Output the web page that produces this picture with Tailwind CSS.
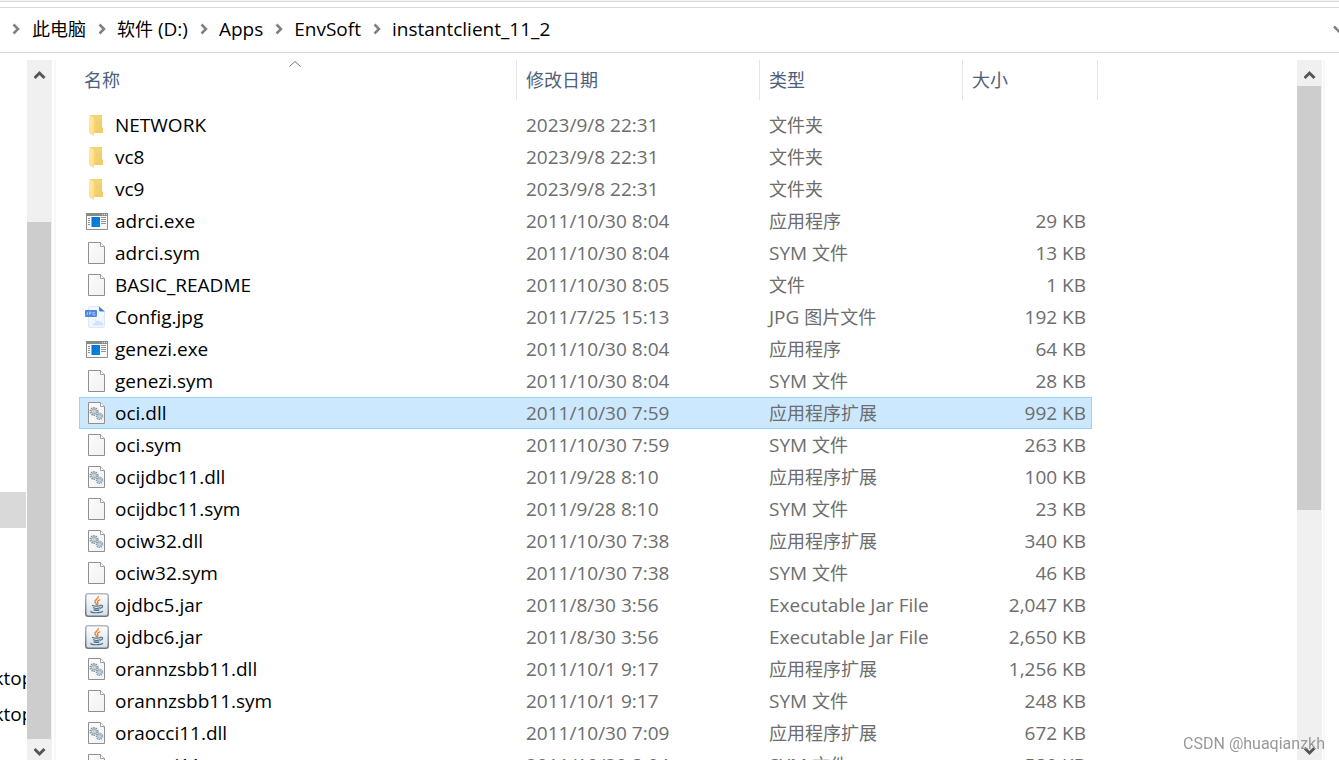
<!DOCTYPE html>
<html lang="zh-CN">
<head>
    <meta charset="UTF-8">
    <meta name="viewport" content="width=device-width, initial-scale=1.0">
    <title>instantclient_11_2</title>
    <script src="https://cdn.jsdelivr.net/npm/@tailwindcss/browser@4"></script>
    <style>
        body {
            font-family: 'Open Sans', 'Noto Sans CJK SC', sans-serif;
        }
    </style>
</head>
<body class="h-screen overflow-hidden flex flex-col bg-white text-black text-[19px] leading-6">
    <!-- Icon sprites -->
    <svg class="absolute size-0" xmlns="http://www.w3.org/2000/svg">
        <defs>
            <linearGradient id="folderFront" x1="0" y1="0" x2="1" y2="1">
                <stop offset="0" stop-color="#ffeaa6" />
                <stop offset="1" stop-color="#fbdc84" />
            </linearGradient>
            <linearGradient id="folderBack" x1="0" y1="0" x2="1" y2="1">
                <stop offset="0" stop-color="#f5d880" />
                <stop offset="1" stop-color="#efca63" />
            </linearGradient>
            <linearGradient id="paper" x1="0" y1="0" x2="1" y2="1">
                <stop offset="0" stop-color="#fbfbfb" />
                <stop offset="1" stop-color="#f0f2f2" />
            </linearGradient>
            <linearGradient id="jarBox" x1="0" y1="0" x2="0" y2="1">
                <stop offset="0" stop-color="#ffffff" />
                <stop offset="1" stop-color="#d9dde1" />
            </linearGradient>
            <linearGradient id="jarEdge" x1="0" y1="0" x2="0" y2="1">
                <stop offset="0" stop-color="#aebac5" />
                <stop offset="1" stop-color="#61788b" />
            </linearGradient>
            <linearGradient id="exeBlue" x1="0" y1="0" x2="1" y2="1">
                <stop offset="0" stop-color="#0a6fd0" />
                <stop offset="1" stop-color="#0086e4" />
            </linearGradient>
        </defs>
        <symbol id="folder" viewBox="0 0 24 24">
            <path d="M5 2h12v12l1 1v5H7z" fill="url(#folderBack)" />
            <path d="M4 2l5 3v18l-5-3z" fill="url(#folderFront)" />
        </symbol>
        <symbol id="exe" viewBox="0 0 24 24">
            <path d="M1.5 4.5h21v16h-21z" fill="#f7f7f7" stroke="#8a8e91" />
            <path d="M1 4h22v3H1z" fill="#84898c" />
            <path d="M17 5h1v1h-1zM19 5h1v1h-1zM21 5h1v1h-1z" fill="#e4e6e7" />
            <path d="M3 9.500h2M3 11.500h2M3 13.500h2M3 15.500h2M16 8.500h5M16 10.500h5M16 12.500h5M16 14.500h5" stroke="#8f9497" />
            <path d="M6.500 8h8.500v10H6.500z" fill="url(#exeBlue)" />
        </symbol>
        <symbol id="file" viewBox="0 0 24 24">
            <path d="M3.500 1.500h12l4 4v17h-16z" fill="url(#paper)" stroke="#8f8f8f" />
            <path d="M15.500 1.500v4h4" fill="#fff" stroke="#a0a0a0" />
        </symbol>
        <symbol id="dll" viewBox="0 0 24 24">
            <use href="#file" />
            <circle cx="9" cy="10.500" r="3.700" fill="none" stroke="#87939c" stroke-width="1.700" stroke-dasharray="1.450 .88" />
            <circle cx="9" cy="10.500" r="2.500" fill="#dce2e5" stroke="#8e9ba4" stroke-width=".9" />
            <circle cx="9" cy="10.500" r=".9" fill="#fff" stroke="#8e9ba4" stroke-width=".6" />
            <circle cx="14.500" cy="15.300" r="3" fill="none" stroke="#7d99aa" stroke-width="1.500" stroke-dasharray="1.250 .84" />
            <circle cx="14.500" cy="15.300" r="1.900" fill="#dcebf2" stroke="#86a3b4" stroke-width=".9" />
            <circle cx="14.500" cy="15.300" r=".6" fill="#fff" stroke="#86a3b4" stroke-width=".5" />
        </symbol>
        <symbol id="jpg" viewBox="0 0 24 24">
            <path d="M5 1.500h9.500l5 5V21q0 1.500-1.500 1.500H5Q3.500 22.500 3.500 21V3Q3.500 1.500 5 1.500z" fill="#f2f6fe" stroke="#dfe8fa" />
            <path d="M14 1.500v3.500q0 1.500 1.500 1.500h4.500z" fill="#4a80da" />
            <path d="M8 20.500q-.5-2.500 2-3 2-3.500 4.500-1 3.500-.2 4 4z" fill="#d3e1fa" />
            <circle cx="10" cy="15" r="1" fill="#dce7fb" />
            <rect x="0" y="5" width="12" height="7" rx="1" fill="#4f87e0" />
            <path d="M2.500 7v2.500h-1M4.500 10V7h1.500v1.500H4.500M10 7.500H8V10h2V9" fill="none" stroke="#b7d0f6" stroke-width=".8" />
        </symbol>
        <symbol id="jar" viewBox="0 0 24 24">
            <rect x=".75" y=".75" width="22.500" height="22.500" rx="2.500" fill="url(#jarBox)" stroke="url(#jarEdge)" stroke-width="1.500" />
            <path d="M13.200 3.500c.8 2.500-4 3.200-3.300 5.300.3 1 1.400 1.500 1.600 2.700M15 6.800c-2.300.7-3.200 1.800-2.200 2.900.6.700.3 1.300-.3 2" fill="none" stroke="#ee7d2b" stroke-width="1.300" stroke-linecap="round" />
            <path d="M7.500 12.500c1.500.8 6.500.8 8 0M8.300 14.800c1.500.7 5 .7 6.500 0M9 16.900c1.300.5 3.800.5 5 0M15.800 12.300c2.300-.5 2.500 2-.3 3M6 18.300c-1.800 1.800 9.500 2 11.500.2" fill="none" stroke="#44708f" stroke-width="1.200" stroke-linecap="round" />
        </symbol>
        <symbol id="crumb" viewBox="0 0 8 12">
            <path d="M1.500 1.500L6 6l-4.500 4.500" fill="none" stroke="#808080" stroke-width="2.500" />
        </symbol>
        <symbol id="up" viewBox="0 0 12 10">
            <path d="M.5 8l5-5 5 5" fill="none" stroke="#565656" stroke-width="3" />
        </symbol>
        <symbol id="down" viewBox="0 0 12 10">
            <path d="M.5 2l5 5 5-5" fill="none" stroke="#565656" stroke-width="3" />
        </symbol>
    </svg>

    <div class="h-0.5 shrink-0 bg-[#f5f5f5] border-b border-[#d9d9d9]"></div>

    <!-- Address bar -->
    <nav aria-label="地址" class="mt-[5px] h-[46px] shrink-0 border-y border-[#d9d9d9] pl-3 pb-0.5 flex items-center justify-between overflow-hidden">
        <ol class="flex items-center whitespace-nowrap">
            <li class="flex items-center"><svg class="w-2 h-3 mr-3"><use href="#crumb" /></svg><a href="#" class="text-lg leading-6">此电脑</a></li>
            <li class="flex items-center"><svg class="w-2 h-3 ml-3 mr-[11px]"><use href="#crumb" /></svg><a href="#"><span class="text-lg leading-6">软件</span> (D:)</a></li>
            <li class="flex items-center"><svg class="w-2 h-3 ml-3 mr-[11px]"><use href="#crumb" /></svg><a href="#">Apps</a></li>
            <li class="flex items-center"><svg class="w-2 h-3 ml-3 mr-[11px]"><use href="#crumb" /></svg><a href="#">EnvSoft</a></li>
            <li class="flex items-center"><svg class="w-2 h-3 ml-3 mr-[11px]"><use href="#crumb" /></svg><a href="#">instantclient_11_2</a></li>
        </ol>
        <button aria-label="历史记录" class="-mr-1.5 shrink-0"><svg class="w-3 h-2.5" viewBox="0 0 12 10"><path d="M1 2.500l5 5 5-5" fill="none" stroke="#808080" stroke-width="2.500" /></svg></button>
    </nav>

    <main class="flex-1 min-h-0 mt-[7px] flex">
        <!-- Navigation pane -->
        <aside class="w-[26px] mr-px shrink-0 overflow-hidden flex flex-col">
            <a href="#" aria-label="当前文件夹" class="mt-[432px] h-9 shrink-0 bg-[#d9d9d9]"></a>
            <a href="#" class="mt-[132px] h-9 shrink-0 -ml-10 flex items-center">Desktop</a>
            <a href="#" class="h-9 shrink-0 -ml-10 flex items-center">Desktop</a>
        </aside>
        <div class="w-[25px] shrink-0 bg-[#f0f0f0] flex flex-col">
            <button aria-label="向上滚动" class="h-[26px] shrink-0 flex items-center justify-center pt-1"><svg class="w-3 h-2.5"><use href="#up" /></svg></button>
            <div class="flex-1 flex flex-col pt-[136px]">
                <div class="flex-1 mr-px bg-[#cdcdcd]"></div>
            </div>
            <button aria-label="向下滚动" class="h-[21px] shrink-0 flex items-center justify-center pt-1"><svg class="w-3 h-2.5"><use href="#down" /></svg></button>
        </div>
        <div class="w-0.5 ml-0.5 shrink-0 bg-[#f7f7f7]"></div>

        <!-- File list -->
        <section class="flex-1 min-w-0 overflow-hidden pl-[23px]">
            <table class="table-fixed w-[1019px] border-separate border-spacing-0 whitespace-nowrap">
                <colgroup>
                    <col class="w-[438px]">
                    <col class="w-[243px]">
                    <col class="w-[203px]">
                    <col class="w-[129px]">
                    <col class="w-1.5">
                </colgroup>
                <thead>
                    <tr class="text-left text-lg text-[#4c607a]">
                        <th class="p-0 pb-[9px] font-normal">
                            <div class="relative h-10 pl-[5px] flex items-center border-r border-[#e5e5e5]">
                                名称
                                <svg class="absolute top-px left-[210px] w-3 h-1.5" viewBox="0 0 12 6"><path d="M.5 5.500l5.500-5 5.500 5" fill="none" stroke="#6e6e6e" /></svg>
                            </div>
                        </th>
                        <th class="p-0 pb-[9px] font-normal"><div class="h-10 pl-[9px] flex items-center border-r border-[#e5e5e5]">修改日期</div></th>
                        <th class="p-0 pb-[9px] font-normal"><div class="h-10 pl-[9px] flex items-center border-r border-[#e5e5e5]">类型</div></th>
                        <th class="p-0 pb-[9px] font-normal"><div class="h-10 pl-[9px] flex items-center">大小</div></th>
                        <td class="p-0 pb-[9px]"><div class="h-10 border-r border-[#e5e5e5]"></div></td>
                    </tr>
                </thead>
                <tbody id="fileList"></tbody>
            </table>
        </section>

        <div class="w-[25px] shrink-0 bg-[#f0f0f0] flex flex-col">
            <button aria-label="向上滚动" class="h-[26px] shrink-0 flex items-center justify-center pt-1"><svg class="w-3 h-2.5"><use href="#up" /></svg></button>
            <div class="flex-1 flex flex-col">
                <div class="h-[65%] mr-px bg-[#cdcdcd]"></div>
            </div>
            <button aria-label="向下滚动" class="h-[22px] shrink-0 flex items-center justify-center pt-1"><svg class="w-3 h-2.5"><use href="#down" /></svg></button>
        </div>
        <div class="w-0.5 ml-px mr-3.5 shrink-0 bg-[#f7f7f7]"></div>
    </main>

    <div class="fixed right-3.5 bottom-1 text-base leading-6 text-[#999999] font-[Roboto,sans-serif]">CSDN @huaqianzkh</div>

    <script>
        // icon, name, modified, type, size
        const files = [
            ['folder', 'NETWORK', '2023/9/8 22:31', '文件夹', ''],
            ['folder', 'vc8', '2023/9/8 22:31', '文件夹', ''],
            ['folder', 'vc9', '2023/9/8 22:31', '文件夹', ''],
            ['exe', 'adrci.exe', '2011/10/30 8:04', '应用程序', '29 KB'],
            ['file', 'adrci.sym', '2011/10/30 8:04', 'SYM 文件', '13 KB'],
            ['file', 'BASIC_README', '2011/10/30 8:05', '文件', '1 KB'],
            ['jpg', 'Config.jpg', '2011/7/25 15:13', 'JPG 图片文件', '192 KB'],
            ['exe', 'genezi.exe', '2011/10/30 8:04', '应用程序', '64 KB'],
            ['file', 'genezi.sym', '2011/10/30 8:04', 'SYM 文件', '28 KB'],
            ['dll', 'oci.dll', '2011/10/30 7:59', '应用程序扩展', '992 KB'],
            ['file', 'oci.sym', '2011/10/30 7:59', 'SYM 文件', '263 KB'],
            ['dll', 'ocijdbc11.dll', '2011/9/28 8:10', '应用程序扩展', '100 KB'],
            ['file', 'ocijdbc11.sym', '2011/9/28 8:10', 'SYM 文件', '23 KB'],
            ['dll', 'ociw32.dll', '2011/10/30 7:38', '应用程序扩展', '340 KB'],
            ['file', 'ociw32.sym', '2011/10/30 7:38', 'SYM 文件', '46 KB'],
            ['jar', 'ojdbc5.jar', '2011/8/30 3:56', 'Executable Jar File', '2,047 KB'],
            ['jar', 'ojdbc6.jar', '2011/8/30 3:56', 'Executable Jar File', '2,650 KB'],
            ['dll', 'orannzsbb11.dll', '2011/10/1 9:17', '应用程序扩展', '1,256 KB'],
            ['file', 'orannzsbb11.sym', '2011/10/1 9:17', 'SYM 文件', '248 KB'],
            ['dll', 'oraocci11.dll', '2011/10/30 7:09', '应用程序扩展', '672 KB'],
            ['file', 'oraocci11.sym', '2011/10/30 8:04', 'SYM 文件', '580 KB'],
        ];
        const selected = 'oci.dll';

        document.getElementById('fileList').innerHTML = files.map(([icon, name, date, type, size]) => {
            const cell = name === selected ? 'bg-[#cce8ff] border-[#99d1ff]' : 'border-transparent';
            // Chinese runs are set one pixel smaller than Latin ones
            const typeHtml = type.replace(/[\u4e00-\u9fff]+/g, '<span class="text-lg leading-6">$&</span>');
            return `
                <tr class="text-[#6d6d6d]">
                    <td class="h-8 p-0 pl-[5px] border-y border-l ${cell}">
                        <div class="flex items-center gap-1.5 text-black"><svg class="size-6 shrink-0"><use href="#${icon}" /></svg>${name}</div>
                    </td>
                    <td class="h-8 p-0 pl-[9px] border-y ${cell}">${date}</td>
                    <td class="h-8 p-0 pl-[9px] border-y ${cell}">${typeHtml}</td>
                    <td class="h-8 p-0 pr-[5px] text-right border-y border-r ${cell}">${size}</td>
                </tr>
            `;
        }).join('');
    </script>
</body>
</html>
